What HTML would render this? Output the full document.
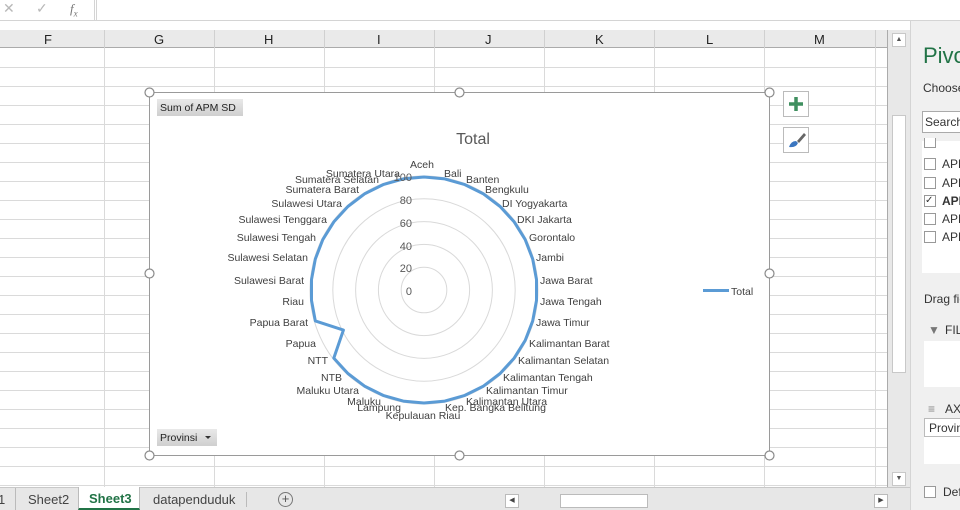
<!DOCTYPE html>
<html><head><style>
*{margin:0;padding:0;box-sizing:border-box}
body{width:960px;height:510px;overflow:hidden;background:#fff;font-family:"Liberation Sans",sans-serif;position:relative}
.a{position:absolute}
</style></head><body>
<!-- formula bar -->
<div class="a" style="left:0;top:0;width:960px;height:21px;background:#fff;border-bottom:1px solid #d4d4d4"></div>
<div class="a" style="left:0;top:0;width:94px;height:20px;color:#b8b8b8;font-size:14px">
<span class="a" style="left:3px;top:0">✕</span><span class="a" style="left:36px;top:0">✓</span><span class="a" style="left:70px;top:1px;color:#777;font-style:italic;font-family:'Liberation Serif',serif;font-size:13px">f<sub style="font-size:9px">x</sub></span></div>
<div class="a" style="left:94px;top:0;width:3px;height:20px;border-left:1px solid #d4d4d4;border-right:1px solid #d4d4d4"></div>
<div class="a" style="left:0;top:21px;width:960px;height:9px;background:#fff"></div>
<!-- column headers -->
<div class="a" style="left:0;top:30px;width:888px;height:18px;background:#eaeaea;border-bottom:1px solid #ababab;font-size:13px;color:#222">
<span class="a" style="left:44px;top:2px">F</span>
<span class="a" style="left:154px;top:2px">G</span>
<span class="a" style="left:264px;top:2px">H</span>
<span class="a" style="left:377px;top:2px">I</span>
<span class="a" style="left:485px;top:2px">J</span>
<span class="a" style="left:595px;top:2px">K</span>
<span class="a" style="left:706px;top:2px">L</span>
<span class="a" style="left:814px;top:2px">M</span>
</div>
<svg class="a" style="left:0;top:30px" width="888" height="458">
<g stroke="#d0d0d0" stroke-width="1">
<line x1="104.5" y1="0" x2="104.5" y2="18"/><line x1="214.5" y1="0" x2="214.5" y2="18"/><line x1="324.5" y1="0" x2="324.5" y2="18"/><line x1="434.5" y1="0" x2="434.5" y2="18"/><line x1="544.5" y1="0" x2="544.5" y2="18"/><line x1="654.5" y1="0" x2="654.5" y2="18"/><line x1="764.5" y1="0" x2="764.5" y2="18"/><line x1="875.5" y1="0" x2="875.5" y2="18"/>
</g>
<g stroke="#dadada" stroke-width="1">
<line x1="104.5" y1="18" x2="104.5" y2="458"/><line x1="214.5" y1="18" x2="214.5" y2="458"/><line x1="324.5" y1="18" x2="324.5" y2="458"/><line x1="434.5" y1="18" x2="434.5" y2="458"/><line x1="544.5" y1="18" x2="544.5" y2="458"/><line x1="654.5" y1="18" x2="654.5" y2="458"/><line x1="764.5" y1="18" x2="764.5" y2="458"/><line x1="875.5" y1="18" x2="875.5" y2="458"/>
<line x1="0" y1="37.5" x2="888" y2="37.5"/><line x1="0" y1="56.5" x2="888" y2="56.5"/><line x1="0" y1="75.5" x2="888" y2="75.5"/><line x1="0" y1="94.5" x2="888" y2="94.5"/><line x1="0" y1="113.5" x2="888" y2="113.5"/><line x1="0" y1="132.5" x2="888" y2="132.5"/><line x1="0" y1="151.5" x2="888" y2="151.5"/><line x1="0" y1="170.5" x2="888" y2="170.5"/><line x1="0" y1="189.5" x2="888" y2="189.5"/><line x1="0" y1="208.5" x2="888" y2="208.5"/><line x1="0" y1="227.5" x2="888" y2="227.5"/><line x1="0" y1="246.5" x2="888" y2="246.5"/><line x1="0" y1="265.5" x2="888" y2="265.5"/><line x1="0" y1="284.5" x2="888" y2="284.5"/><line x1="0" y1="303.5" x2="888" y2="303.5"/><line x1="0" y1="322.5" x2="888" y2="322.5"/><line x1="0" y1="341.5" x2="888" y2="341.5"/><line x1="0" y1="360.5" x2="888" y2="360.5"/><line x1="0" y1="379.5" x2="888" y2="379.5"/><line x1="0" y1="398.5" x2="888" y2="398.5"/><line x1="0" y1="417.5" x2="888" y2="417.5"/><line x1="0" y1="436.5" x2="888" y2="436.5"/><line x1="0" y1="455.5" x2="888" y2="455.5"/>
</g>
<line x1="887.5" y1="0" x2="887.5" y2="458" stroke="#ababab"/>
</svg>
<!-- vertical scrollbar -->
<div class="a" style="left:888px;top:30px;width:22px;height:458px;background:#e8e8e8"></div>
<div class="a" style="left:892px;top:33px;width:14px;height:14px;background:#fff;border:1px solid #c8c8c8;font-size:7px;text-align:center;color:#555;line-height:12px">▲</div>
<div class="a" style="left:892px;top:115px;width:14px;height:258px;background:#fff;border:1px solid #c8c8c8"></div>
<div class="a" style="left:892px;top:472px;width:14px;height:14px;background:#fff;border:1px solid #c8c8c8;font-size:7px;text-align:center;color:#555;line-height:12px">▼</div>
<!-- chart -->
<svg class="a" style="left:0;top:0" width="888" height="487">
<rect x="149.5" y="92.5" width="620" height="363" fill="#fff" stroke="#9a9a9a"/>
<g fill="#fff" stroke="#8a8a8a" stroke-width="1.2">
<circle cx="149.5" cy="92.5" r="4.5"/><circle cx="459.5" cy="92.5" r="4.5"/><circle cx="769.5" cy="92.5" r="4.5"/>
<circle cx="149.5" cy="273.5" r="4.5"/><circle cx="769.5" cy="273.5" r="4.5"/>
<circle cx="149.5" cy="455.5" r="4.5"/><circle cx="459.5" cy="455.5" r="4.5"/><circle cx="769.5" cy="455.5" r="4.5"/>
</g>
<g fill="none" stroke="#d9d9d9">
<circle cx="424" cy="290" r="22.8"/><circle cx="424" cy="290" r="45.6"/><circle cx="424" cy="290" r="68.4"/><circle cx="424" cy="290" r="91.2"/><circle cx="424" cy="290" r="114"/>
</g>
<polygon fill="none" stroke="#5b9bd5" stroke-width="3" stroke-linejoin="round" points="424,177 444.8,178.9 464.8,184.6 483.5,193.9 500.1,206.5 514.2,221.9 525.2,239.6 532.7,259.1 536.5,279.6 536.5,300.4 532.7,320.9 525.2,340.4 514.2,358.1 500.1,373.5 483.5,386.1 464.8,395.4 444.8,401.1 424,403 403.2,401.1 383.2,395.4 364.5,386.1 347.9,373.5 333.8,358.1 343.4,330.1 315.3,320.9 311.5,300.4 311.5,279.6 315.3,259.1 322.8,239.6 333.8,221.9 347.9,206.5 364.5,193.9 383.2,184.6 403.2,178.9"/>
<g font-family="Liberation Sans, sans-serif" font-size="11" fill="#595959" text-anchor="end">
<text x="412" y="295">0</text><text x="412" y="272">20</text><text x="412" y="250">40</text><text x="412" y="227">60</text><text x="412" y="204">80</text><text x="412" y="181">100</text>
</g>
<text x="473" y="144" font-size="16" fill="#595959" text-anchor="middle" font-family="Liberation Sans, sans-serif">Total</text>
<g font-family="Liberation Sans, sans-serif" font-size="10.5" fill="#404040">
<g text-anchor="middle"><text x="422" y="168">Aceh</text><text x="423" y="419">Kepulauan Riau</text></g>
<g text-anchor="start">
<text x="444" y="177">Bali</text><text x="466" y="183">Banten</text><text x="485" y="193">Bengkulu</text><text x="502" y="207">DI Yogyakarta</text><text x="517" y="223">DKI Jakarta</text><text x="529" y="241">Gorontalo</text><text x="536" y="261">Jambi</text><text x="540" y="284">Jawa Barat</text><text x="540" y="305">Jawa Tengah</text><text x="536" y="326">Jawa Timur</text><text x="529" y="347">Kalimantan Barat</text><text x="518" y="364">Kalimantan Selatan</text><text x="503" y="381">Kalimantan Tengah</text><text x="486" y="394">Kalimantan Timur</text><text x="466" y="405">Kalimantan Utara</text><text x="445" y="411">Kep. Bangka Belitung</text>
</g>
<g text-anchor="end">
<text x="401" y="411">Lampung</text><text x="381" y="405">Maluku</text><text x="359" y="394">Maluku Utara</text><text x="342" y="381">NTB</text><text x="328" y="364">NTT</text><text x="316" y="347">Papua</text><text x="308" y="326">Papua Barat</text><text x="304" y="305">Riau</text><text x="304" y="284">Sulawesi Barat</text><text x="308" y="261">Sulawesi Selatan</text><text x="316" y="241">Sulawesi Tengah</text><text x="327" y="223">Sulawesi Tenggara</text><text x="342" y="207">Sulawesi Utara</text><text x="359" y="193">Sumatera Barat</text><text x="379" y="183">Sumatera Selatan</text><text x="400" y="177">Sumatera Utara</text>
</g>
</g>
<line x1="703" y1="290.5" x2="729" y2="290.5" stroke="#5b9bd5" stroke-width="3"/>
<text x="731" y="295" font-size="10.5" fill="#404040" font-family="Liberation Sans, sans-serif">Total</text>
<defs><linearGradient id="bg" x1="0" y1="0" x2="0" y2="1"><stop offset="0" stop-color="#e9e9e9"/><stop offset="1" stop-color="#cfcfcf"/></linearGradient></defs>
<rect x="157" y="99" width="86" height="17" fill="url(#bg)"/>
<text x="160" y="111" font-size="10.5" fill="#222" font-family="Liberation Sans, sans-serif">Sum of APM SD</text>
<rect x="157" y="429" width="60" height="17" fill="url(#bg)"/>
<text x="160" y="441" font-size="10.5" fill="#222" font-family="Liberation Sans, sans-serif">Provinsi</text>
<path d="M205 436 h6 l-3 3z" fill="#333"/>
<!-- side buttons -->
<rect x="783.5" y="91.5" width="25" height="25" fill="#fff" stroke="#bbb"/>
<path d="M796 97 v14 M789 104 h14" stroke="#3f8f5f" stroke-width="3.5"/>
<rect x="783.5" y="127.5" width="25" height="25" fill="#fff" stroke="#bbb"/>
<path d="M789 147 q2 -6 7 -6 l2 2 q-2 5 -9 4z" fill="#3b76c0"/>
<path d="M797 141 l7 -8 2 2 -7 8z" fill="#666"/>
</svg>
<!-- sheet tabs -->
<div class="a" style="left:0;top:487px;width:910px;height:23px;background:#e7e7e7;border-top:1px solid #c8c8c8;font-size:13px;color:#444">
<div class="a" style="left:0;top:0;width:16px;height:22px;border-right:1px solid #bbb"><span class="a" style="left:-2px;top:4px">1</span></div>
<span class="a" style="left:28px;top:4px">Sheet2</span>
<div class="a" style="left:78px;top:-1px;width:62px;height:23px;background:#fff;border-bottom:2px solid #217346;border-left:1px solid #bbb;border-right:1px solid #bbb"><span class="a" style="left:10px;top:4px;color:#217346;font-weight:bold">Sheet3</span></div>
<span class="a" style="left:153px;top:4px">datapenduduk</span>
<div class="a" style="left:246px;top:4px;width:1px;height:15px;background:#bbb"></div>
<div class="a" style="left:278px;top:4px;width:15px;height:15px;border:1px solid #777;border-radius:50%;text-align:center;line-height:12px;font-size:13px;color:#555">+</div>
<div class="a" style="left:505px;top:6px;width:14px;height:14px;background:#fff;border:1px solid #bbb;font-size:7px;text-align:center;line-height:12px">◀</div>
<div class="a" style="left:560px;top:6px;width:88px;height:14px;background:#fff;border:1px solid #bbb"></div>
<div class="a" style="left:874px;top:6px;width:14px;height:14px;background:#fff;border:1px solid #bbb;font-size:7px;text-align:center;line-height:12px">▶</div>
</div>
<!-- pivot pane -->
<div class="a" style="left:910px;top:21px;width:50px;height:489px;background:#f0f0f0;border-left:1px solid #d4d4d4;overflow:hidden;font-size:12px;color:#333;white-space:nowrap">
<span class="a" style="left:12px;top:22px;font-size:22px;color:#217346">Pivot</span>
<span class="a" style="left:12px;top:60px">Choose</span>
<div class="a" style="left:11px;top:90px;width:50px;height:22px;background:#fff;border:1px solid #aaa"><span class="a" style="left:2px;top:3px">Search</span></div>
<div class="a" style="left:11px;top:120px;width:50px;height:132px;background:#fff"></div>
<div class="a" style="left:13px;top:117px;width:12px;height:10px;border:1px solid #999;border-top:none;background:#fff"></div>
<div class="a" style="left:13px;top:137px;width:12px;height:12px;border:1px solid #999;background:#fff"></div><span class="a" style="left:31px;top:136px">APK</span>
<div class="a" style="left:13px;top:156px;width:12px;height:12px;border:1px solid #999;background:#fff"></div><span class="a" style="left:31px;top:155px">APK</span>
<div class="a" style="left:13px;top:174px;width:12px;height:12px;border:1px solid #999;background:#fff;font-size:10px;line-height:10px">✓</div><span class="a" style="left:31px;top:173px;font-weight:bold">APM</span>
<div class="a" style="left:13px;top:192px;width:12px;height:12px;border:1px solid #999;background:#fff"></div><span class="a" style="left:31px;top:191px">APM</span>
<div class="a" style="left:13px;top:210px;width:12px;height:12px;border:1px solid #999;background:#fff"></div><span class="a" style="left:31px;top:209px">APM</span>
<span class="a" style="left:13px;top:271px">Drag fie</span>
<span class="a" style="left:17px;top:302px;color:#777">▼</span><span class="a" style="left:34px;top:302px">FIL</span>
<div class="a" style="left:13px;top:320px;width:40px;height:46px;background:#fff"></div>
<span class="a" style="left:17px;top:381px;color:#888">≡</span><span class="a" style="left:34px;top:381px">AX</span>
<div class="a" style="left:13px;top:397px;width:40px;height:46px;background:#fff"></div>
<div class="a" style="left:13px;top:397px;width:40px;height:19px;border:1px solid #bbb;background:#fff"><span class="a" style="left:4px;top:2px">Provin</span></div>
<div class="a" style="left:13px;top:465px;width:12px;height:12px;border:1px solid #999;background:#fff"></div><span class="a" style="left:32px;top:464px">Def</span>
</div>
</body></html>
